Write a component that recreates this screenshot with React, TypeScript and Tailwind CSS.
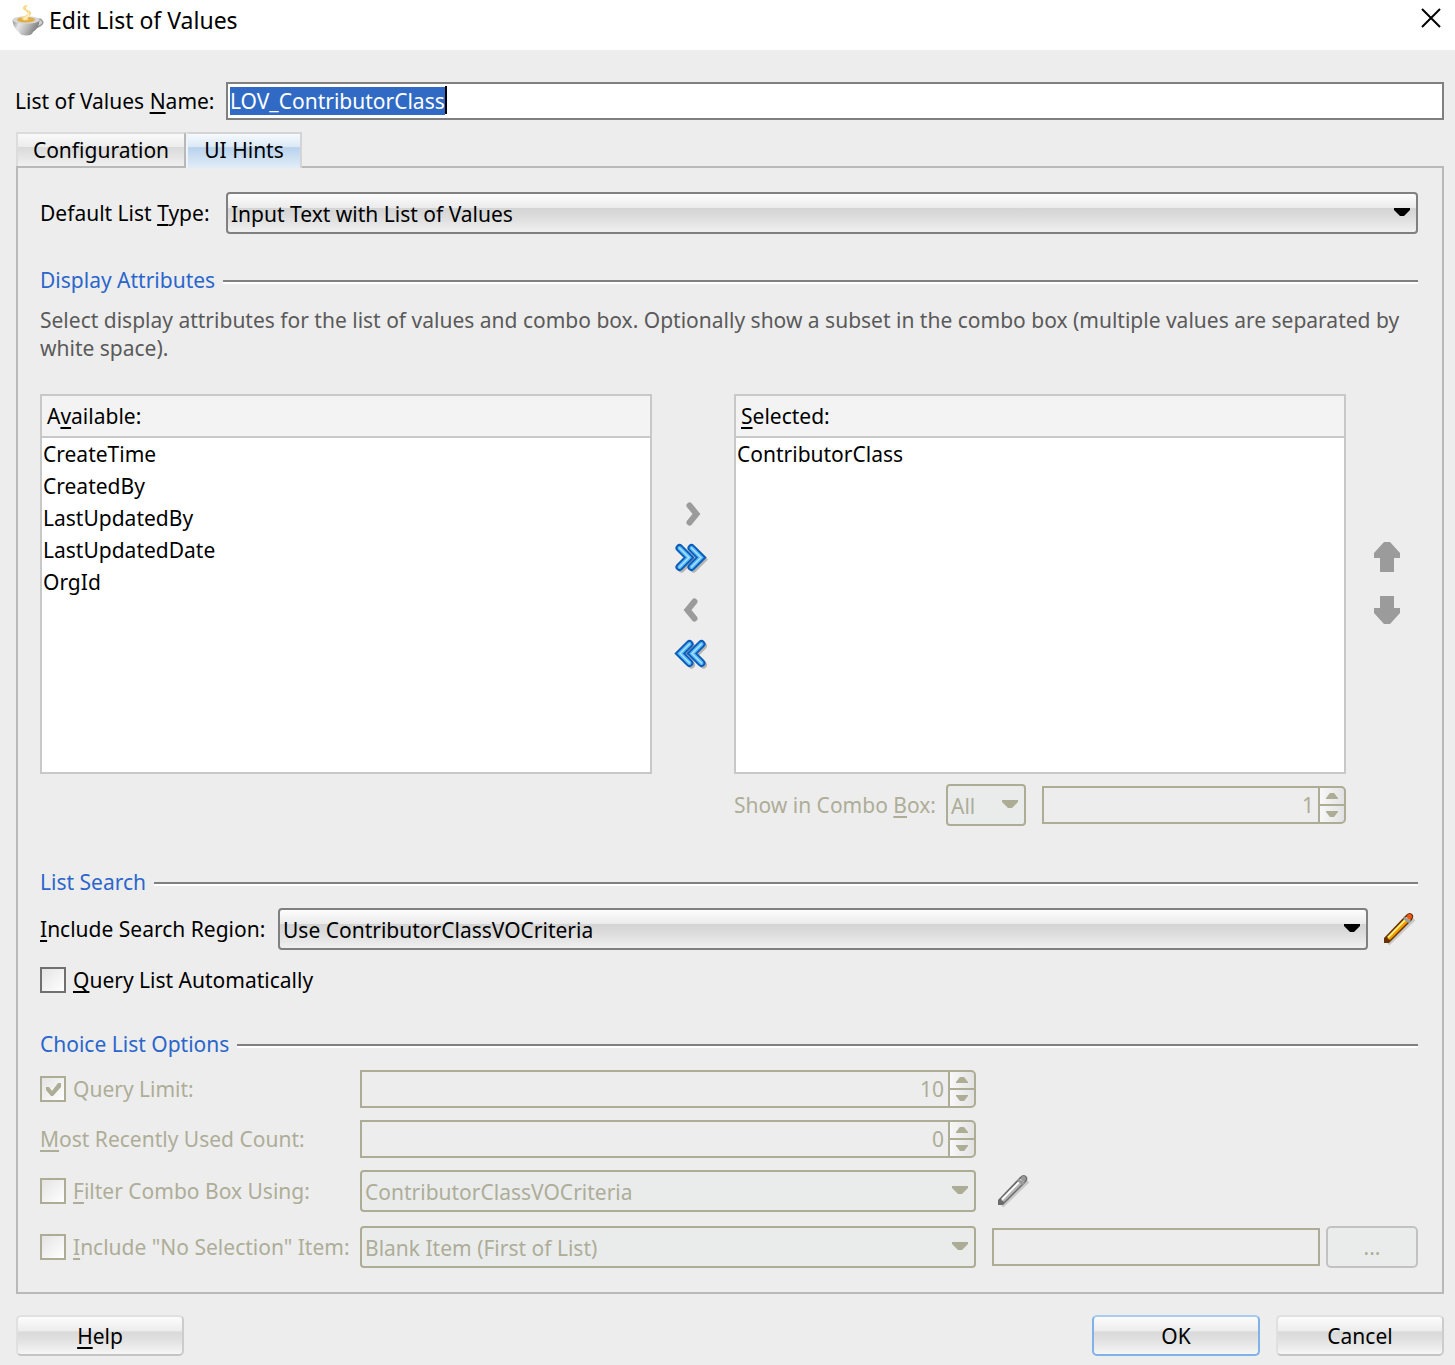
import { useEffect, useRef, useState } from "react";
import type { ReactNode } from "react";

const AVAILABLE = ["CreateTime", "CreatedBy", "LastUpdatedBy", "LastUpdatedDate", "OrgId"];
const SELECTED = ["ContributorClass"];

function Key({ children }: { children: ReactNode }) {
  return (
    <span className="underline decoration-2 underline-offset-3 [text-decoration-skip-ink:none]">
      {children}
    </span>
  );
}

function CupIcon() {
  return (
    <svg className="h-8 w-8 shrink-0" viewBox="0 0 32 32" aria-hidden="true">
      <defs>
        <linearGradient id="cup" x1="0" x2="1" y1="0" y2="0.3">
          <stop offset="0" stopColor="#8a8a8a" />
          <stop offset="0.3" stopColor="#e6e6e6" />
          <stop offset="0.6" stopColor="#bdbdbd" />
          <stop offset="1" stopColor="#7d7d7d" />
        </linearGradient>
      </defs>
      <path d="M25 15 L29 15.500 Q33 19 28.500 21.500 L22 25" fill="#cfcfcf" stroke="#9a9a9a" strokeWidth="1.500" />
      <path d="M0.500 16 Q1 24 7 28 Q8 31.500 14 31.500 Q20 31.500 21 28 Q27 24 27.500 16 Z" fill="url(#cup)" />
      <ellipse cx="14" cy="16" rx="13.500" ry="3.800" fill="#d6d6d6" />
      <ellipse cx="14" cy="15.800" rx="9" ry="2.800" fill="#e0ac45" />
      <path d="M13.500 1 Q8 4 13.500 7 Q19 10 11 12.500 Q8 14.500 12 16.500 L17 16 Q14 14 17.500 12 Q22 8.500 15.500 6 Q12 4 16 1.500 Z" fill="#fbd98a" />
      <path d="M12 15 Q18 12 16 9" fill="none" stroke="#fff3cf" strokeWidth="1.500" />
    </svg>
  );
}

function Chevron({ left }: { left?: boolean }) {
  return (
    <svg className="h-8 w-9" viewBox="0 0 36 32" fill="none" stroke="#9b9b9b" strokeWidth="6" strokeLinecap="round" aria-hidden="true">
      <path d={left ? "M21.500 7.500 L14.500 16 L21.500 24.500" : "M16.500 7.500 L23.500 16 L16.500 24.500"} />
    </svg>
  );
}

function DoubleChevron({ left }: { left?: boolean }) {
  const d = left
    ? "M16.500 6 L7 15.500 L16.500 25 M28.500 6 L19 15.500 L28.500 25"
    : "M6.500 6 L16 15.500 L6.500 25 M18.500 6 L28 15.500 L18.500 25";
  return (
    <svg className="h-8 w-9" viewBox="0 0 36 32" fill="none" strokeLinejoin="miter" strokeLinecap="round" aria-hidden="true">
      <path d={d} stroke="#b4b4b4" strokeWidth="7" transform="translate(2 2)" />
      <path d={d} stroke="#0c5cb8" strokeWidth="8" />
      <path d={d} stroke="#55b8fa" strokeWidth="4" />
      <path d={d} stroke="#a9e0ff" strokeWidth="1.500" />
    </svg>
  );
}

function MoveArrow({ down }: { down?: boolean }) {
  return (
    <svg className="h-8 w-8" viewBox="0 0 32 32" fill="#9b9b9b" aria-hidden="true">
      <path d={down ? "M10 2h14v12h6v5l-10 11h-6L4 19v-5h6z" : "M14 1h6l10 11v5h-6v14H10V17H4v-5z"} />
    </svg>
  );
}

function Pencil({ gray }: { gray?: boolean }) {
  return (
    <svg className="h-9 w-9" viewBox="0 0 36 36" fill="none" aria-hidden="true">
      <path d="M6 33 L32 8" stroke="#c9c9c9" strokeWidth="4" />
      <path d="M2 32 L2 27 L24 4 Q28 0 31 4 Q32 6 30 9 L7 32 Z" fill={gray ? "#6b6b6b" : "#6a3400"} />
      <path d="M5 27 L25 6 L29 8 L8 29 Z" fill={gray ? "#b5b5b5" : "#f29a00"} />
      <path d="M6 26.500 L25.500 6.500" stroke={gray ? "#fff" : "#ffee7a"} strokeWidth="2" />
      <path d="M22 7 L28 11" stroke={gray ? "#999" : "#9aa0a8"} strokeWidth="3" />
      <circle cx="27.500" cy="5.500" r="2.500" fill={gray ? "#999" : "#f0551a"} />
    </svg>
  );
}

function Combo({ id, label, value, disabled }: { id: string; label?: string; value: string; disabled?: boolean }) {
  return (
    <div className="relative min-w-0 flex-1">
      <select
        id={id}
        aria-label={label}
        disabled={disabled}
        className="block h-[42px] w-full appearance-none rounded-[4px] border-2 border-[#808080] bg-[linear-gradient(#fdfdfd,#ebebeb_36%,#d4d4d4_38%,#dcdcdc_60%,#f0f0f0)] pl-[3px] pr-8 pt-px text-black disabled:border-[#adad95] disabled:bg-[#eaecec] disabled:bg-none disabled:text-[#adad98] disabled:opacity-100"
      >
        <option>{value}</option>
      </select>
      <svg className="pointer-events-none absolute right-2 top-4 h-2 w-4" viewBox="0 0 16 8" fill={disabled ? "#adad95" : "#000"} aria-hidden="true">
        <path d="M0 0h16v2l-6 6H6L0 2z" />
      </svg>
    </div>
  );
}

function Spinner({ id, label, value }: { id: string; label?: string; value: string }) {
  return (
    <div className="flex h-[38px] min-w-0 flex-1">
      <input
        id={id}
        aria-label={label}
        disabled
        defaultValue={value}
        className="min-w-0 flex-1 border-2 border-r-0 border-[#adad95] bg-transparent pr-1 text-right text-[#adad98]"
      />
      <div className="flex w-7 flex-col divide-y-2 divide-[#adad95] rounded-r-[5px] border-2 border-[#adad95] bg-linear-to-r from-[#f8f8f8] to-[#e2e2e2]">
        <button disabled aria-label="Increase" className="flex flex-1 items-center justify-center">
          <svg className="h-[6px] w-3" viewBox="0 0 12 6" fill="#adad95">
            <path d="M0 6V5l4-5h4l4 5v1z" />
          </svg>
        </button>
        <button disabled aria-label="Decrease" className="flex flex-1 items-center justify-center">
          <svg className="h-[6px] w-3" viewBox="0 0 12 6" fill="#adad95">
            <path d="M0 0v1l4 5h4l4-5V0z" />
          </svg>
        </button>
      </div>
    </div>
  );
}

function Check({ id, checked, disabled, children }: { id: string; checked?: boolean; disabled?: boolean; children: ReactNode }) {
  return (
    <div className="flex items-center gap-[7px]">
      <span className="relative block size-[26px]">
        <input
          id={id}
          type="checkbox"
          defaultChecked={checked}
          disabled={disabled}
          className="peer block size-[26px] appearance-none border-2 border-[#707070] bg-linear-to-br from-[#e4e4e4] to-white disabled:border-[#adad95]"
        />
        <svg className="pointer-events-none absolute inset-0 hidden peer-checked:block" viewBox="0 0 26 26" fill={disabled ? "#adad95" : "#333"} aria-hidden="true">
          <path d="M6 11h3l3 4 6-8h3v4l-8 9h-2l-5-6z" />
        </svg>
      </span>
      <label htmlFor={id} className={disabled ? "whitespace-nowrap text-[#adad98]" : "whitespace-nowrap"}>
        {children}
      </label>
    </div>
  );
}

function SectionTitle({ children }: { children: ReactNode }) {
  return (
    <div className="flex h-7 items-center gap-2">
      <h2 className="text-[#2a66cc]">{children}</h2>
      <div className="mt-1 h-1 flex-1 border-b-2 border-t-2 border-b-white border-t-[#808080]"></div>
    </div>
  );
}

function ListPane({ title, items }: { title: ReactNode; items: string[] }) {
  return (
    <section className="flex h-[380px] min-w-0 flex-1 flex-col border-2 border-[#c8c8c8] bg-white">
      <h3 className="h-[42px] border-b-2 border-[#c8c8c8] bg-[#f3f3f3] px-[5px] leading-10">{title}</h3>
      <ul className="px-px">
        {items.map((item) => (
          <li key={item} className="h-8 leading-8">
            {item}
          </li>
        ))}
      </ul>
    </section>
  );
}

const buttonClass =
  "h-[41px] w-[168px] rounded-[5px] border-2 border-[#e0e0e0] border-b-[#c4c4c4] border-r-[#cccccc] bg-[linear-gradient(#fcfcfc,#ececec_38%,#d9d9d9_40%,#e0e0e0_60%,#f6f6f6)]";

function App() {
  const [name, setName] = useState("LOV_ContributorClass");
  const nameRef = useRef<HTMLInputElement>(null);

  useEffect(() => {
    nameRef.current?.focus();
    nameRef.current?.select();
  }, []);

  return (
    <div className="min-h-screen bg-[#ededed] font-['Noto_Sans',sans-serif] text-[21px] leading-7 text-black">
      <header className="flex h-[50px] items-start justify-between bg-white pl-3 pr-3 pt-1">
        <div className="flex items-center gap-[5px]">
          <CupIcon />
          <h1 className="text-[23px] leading-8">Edit List of Values</h1>
        </div>
        <button aria-label="Close" className="mt-1">
          <svg className="size-6" viewBox="0 0 24 24" stroke="#000" strokeWidth="2">
            <path d="M3 1 L21 19 M21 1 L3 19" />
          </svg>
        </button>
      </header>

      <main className="pb-[9px] pl-[15px] pr-[11px] pt-8">
        <div className="flex items-center">
          <label htmlFor="lov-name" className="w-[211px] whitespace-nowrap">
            List of Values <Key>N</Key>ame:
          </label>
          <div className="relative flex-1">
            <input
              id="lov-name"
              ref={nameRef}
              value={name}
              onChange={(e) => setName(e.target.value)}
              className="block h-[38px] w-full border-2 border-[#808080] bg-white px-[2px] outline-none selection:bg-[#316ac5] selection:text-white"
            />
            <span className="pointer-events-none absolute left-[219px] top-1 h-7 w-[2px] bg-black"></span>
          </div>
        </div>

        <div className="ml-px mt-3 flex" role="tablist">
          <button role="tab" aria-selected="false" className="h-[34px] w-[170px] border-l-2 border-r-2 border-t-2 border-[#dcdcdc] border-r-[#b8b8b8] bg-[linear-gradient(#fafafa,#ececec_40%,#dadada_42%,#f0f0f0)]">
            Configuration
          </button>
          <button role="tab" aria-selected="true" className="relative -mb-[2px] h-9 w-[116px] border-l-2 border-r-2 border-t-2 border-[#d4d4d4] border-l-[#eef3f8] bg-[linear-gradient(#f6fafe,#dbe8f6_38%,#b9d2ec_40%,#e2edf8)] pb-[2px]">
            UI Hints
          </button>
        </div>

        <div className="ml-px border-2 border-[#b9b9b9] pb-6 pl-[22px] pr-6 pt-6" role="tabpanel">
          <div className="flex items-center">
            <label htmlFor="list-type" className="w-[186px] whitespace-nowrap">
              Default List <Key>T</Key>ype:
            </label>
            <Combo id="list-type" value="Input Text with List of Values" />
          </div>

          <div className="mt-8">
            <SectionTitle>Display Attributes</SectionTitle>
          </div>
          <p className="mt-3 text-[#5a5a5a]">
            Select display attributes for the list of values and combo box. Optionally show a subset in the combo box (multiple values are separated by white space).
          </p>

          <div className="mt-8 flex">
            <ListPane title={<>A<Key>v</Key>ailable:</>} items={AVAILABLE} />
            <div className="flex w-[82px] flex-col items-center pr-1 pt-[104px]">
              <button disabled aria-label="Add"><Chevron /></button>
              <button aria-label="Add all" className="mt-3"><DoubleChevron /></button>
              <button disabled aria-label="Remove" className="mt-5"><Chevron left /></button>
              <button aria-label="Remove all" className="mt-3"><DoubleChevron left /></button>
            </div>
            <ListPane title={<><Key>S</Key>elected:</>} items={SELECTED} />
            <div className="flex w-[72px] flex-col items-center gap-[21px] pl-2 pt-[147px]">
              <button disabled aria-label="Move up"><MoveArrow /></button>
              <button disabled aria-label="Move down"><MoveArrow down /></button>
            </div>
          </div>

          <div className="mt-[10px] flex pr-[72px]">
            <div className="min-w-0 flex-1"></div>
            <div className="w-[82px]"></div>
            <div className="flex min-w-0 flex-1 items-center">
              <label htmlFor="combo-count" className="w-[212px] shrink-0 whitespace-nowrap text-[#adad98]">
                Show in Combo <Key>B</Key>ox:
              </label>
              <div className="flex w-20 shrink-0">
                <Combo id="combo-count" value="All" disabled />
              </div>
              <div className="ml-4 flex min-w-0 flex-1">
                <Spinner id="combo-number" label="Number in combo box" value="1" />
              </div>
            </div>
          </div>

          <div className="mt-[42px]">
            <SectionTitle>List Search</SectionTitle>
          </div>
          <div className="mt-3 flex items-center">
            <label htmlFor="search-region" className="w-[238px] whitespace-nowrap">
              <Key>I</Key>nclude Search Region:
            </label>
            <Combo id="search-region" value="Use ContributorClassVOCriteria" />
            <button aria-label="Edit criteria" className="ml-[14px]"><Pencil /></button>
          </div>
          <div className="mt-4">
            <Check id="query-auto"><Key>Q</Key>uery List Automatically</Check>
          </div>

          <div className="mt-9">
            <SectionTitle>Choice List Options</SectionTitle>
          </div>
          <div className="mt-3 flex flex-col gap-3">
            <div className="flex items-center">
              <div className="w-[320px]">
                <Check id="query-limit" checked disabled>Query Limit:</Check>
              </div>
              <div className="flex w-[616px]">
                <Spinner id="limit-value" label="Query limit" value="10" />
              </div>
            </div>
            <div className="flex items-center">
              <label htmlFor="recent-count" className="w-[320px] text-[#adad98]">
                <Key>M</Key>ost Recently Used Count:
              </label>
              <div className="flex w-[616px]">
                <Spinner id="recent-count" value="0" />
              </div>
            </div>
            <div className="flex items-center">
              <div className="w-[320px]">
                <Check id="filter-combo" disabled><Key>F</Key>ilter Combo Box Using:</Check>
              </div>
              <div className="flex w-[616px]">
                <Combo id="filter-value" label="Filter criteria" value="ContributorClassVOCriteria" disabled />
              </div>
              <button disabled aria-label="Edit filter" className="ml-5"><Pencil gray /></button>
            </div>
            <div className="mt-[2px] flex items-center">
              <div className="w-[320px]">
                <Check id="no-selection" disabled><Key>I</Key>nclude "No Selection" Item:</Check>
              </div>
              <div className="flex w-[616px]">
                <Combo id="no-selection-value" label="No selection item" value="Blank Item (First of List)" disabled />
              </div>
              <input aria-label="No selection text" disabled className="ml-4 h-[38px] min-w-0 flex-1 border-2 border-[#adad95] bg-transparent" />
              <button disabled aria-label="Browse" className="ml-[6px] h-[42px] w-[92px] rounded-[5px] border-2 border-[#c2c2c2] bg-[#eaecec] text-[#adad98]">
                ...
              </button>
            </div>
          </div>
        </div>

        <footer className="ml-px mt-[21px] flex gap-4">
          <button className={buttonClass}><Key>H</Key>elp</button>
          <div className="flex-1"></div>
          <button className="h-[41px] w-[168px] rounded-[5px] border-2 border-[#7fb2e8] border-t-[#a9cbee] bg-[linear-gradient(#fcfcfc,#ececec_38%,#d9d9d9_40%,#e0e0e0_60%,#f6f6f6)]">OK</button>
          <button className={buttonClass}>Cancel</button>
        </footer>
      </main>
    </div>
  );
}

export default App;
